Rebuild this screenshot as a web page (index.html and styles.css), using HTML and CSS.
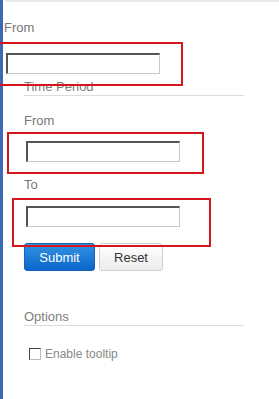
FILE: index.html
```html
<!DOCTYPE html>
<html>
<head>
	<meta charset="utf-8"/>
	<title>Time Period</title>
	<link rel="stylesheet" href="styles.css">
</head>
<body>
	<div class="page">
		<div class="topbar"></div>
		<div class="label first">From</div>
		<input type="text" class="field first-field"/>

		<div class="group">
			<div class="heading">Time Period</div>
			<div class="label from">From</div>
			<input type="text" class="field"/>
			<div class="label to">To</div>
			<input type="text" class="field"/>
			<div class="buttons">
				<button class="btn submit">Submit</button>
				<button class="btn reset">Reset</button>
			</div>
		</div>

		<div class="group options">
			<div class="heading">Options</div>
			<label class="check-row">
				<input type="checkbox" class="check"/>
				<span>Enable tooltip</span>
			</label>
		</div>

		<div class="mark mark1"></div>
		<div class="mark mark2"></div>
		<div class="mark mark3"></div>
	</div>
</body>
</html>
```

FILE: styles.css
```css
body {
	margin: 0;
	background: #fff;
	font-family: "Liberation Sans", Arial, sans-serif;
	overflow: hidden;
}
.page {
	position: relative;
	border-left: 3px solid #3f68b6;
	height: 399px;
	box-sizing: border-box;
}
.topbar {
	height: 2px;
	margin-left: 2px;
	background: #e8e8e8;
}
.label {
	font-size: 13px;
	line-height: 16px;
	color: #777;
}
.label.first {
	margin: 18px 0 0 1px;
}
.label.from {
	margin-top: 17px;
}
.label.to {
	margin-top: 15px;
}
.field {
	display: block;
	box-sizing: border-box;
	width: 154px;
	height: 21px;
	margin: 12px 0 0 2px;
	padding: 0 2px;
	background: #fff;
	border-top: 2px solid #555;
	border-left: 2px solid #555;
	border-right: 1px solid #c8c8c8;
	border-bottom: 1px solid #c8c8c8;
	outline: none;
}
.first-field {
	margin: 17px 0 0 3px;
}
.label.to + .field {
	margin-top: 13px;
}
.group {
	margin: 5px 0 0 21px;
	width: 220px;
}
.heading {
	font-size: 13px;
	line-height: 16px;
	color: #7d7d7d;
	border-bottom: 1px solid #dcdcdc;
}
.buttons {
	display: flex;
	gap: 4px;
	margin-top: 16px;
}
.btn {
	height: 28px;
	border-radius: 3px;
	font-family: "Liberation Sans", Arial, sans-serif;
	font-size: 13px;
	padding: 0;
	cursor: pointer;
}
.submit {
	width: 71px;
	color: #fff;
	border: 1px solid #1463b8;
	background: linear-gradient(#3193e3, #0a66c9);
}
.reset {
	width: 64px;
	color: #333;
	border: 1px solid #cfcfcf;
	background: linear-gradient(#fff, #ececec);
}
.options {
	margin-top: 38px;
}
.check-row {
	display: flex;
	align-items: center;
	height: 16px;
	margin: 20px 0 0 5px;
	font-size: 12px;
	color: #888;
}
.check {
	appearance: none;
	-webkit-appearance: none;
	box-sizing: border-box;
	width: 12px;
	height: 12px;
	margin: 0 4px 0 0;
	border-top: 1px solid #444;
	border-left: 1px solid #444;
	border-right: 1px solid #bbb;
	border-bottom: 1px solid #bbb;
	background: #fff;
}
.mark {
	position: absolute;
	border: 2px solid #d5161d;
	box-sizing: border-box;
	pointer-events: none;
}
.mark1 {
	left: -5px;
	top: 42px;
	width: 185px;
	height: 44px;
}
.mark2 {
	left: 4px;
	top: 132px;
	width: 197px;
	height: 42px;
}
.mark3 {
	left: 9px;
	top: 198px;
	width: 199px;
	height: 49px;
}
```
